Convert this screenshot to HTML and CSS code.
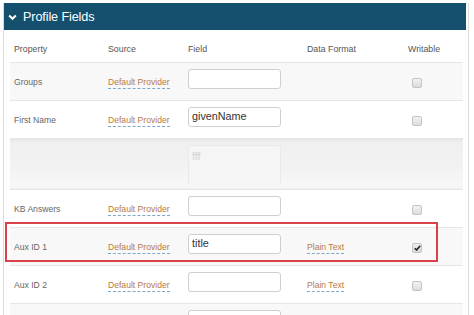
FILE: index.html
```html
<!DOCTYPE html>
<html>
<head>
<meta charset="utf-8">
<link rel="stylesheet" href="styles.css">
</head>
<body>
<div class="panel">
  <div class="panel-header">
    <svg class="chev" width="9" height="7" viewBox="0 0 9 7"><path d="M1.2 1.5 L4.5 4.8 L7.8 1.5" fill="none" stroke="#fff" stroke-width="2"/></svg>
    <span class="title">Profile Fields</span>
  </div>
  <div class="panel-body">
    <div class="grid head">
      <div class="c-prop">Property</div>
      <div class="c-src">Source</div>
      <div class="c-field">Field</div>
      <div class="c-fmt">Data Format</div>
      <div class="c-wr">Writable</div>
    </div>
    <div class="grid row odd">
      <div class="c-prop">Groups</div>
      <div class="c-src"><span class="link">Default Provider</span></div>
      <div class="c-field"><div class="input"></div></div>
      <div class="c-fmt"></div>
      <div class="c-wr"><span class="cb"></span></div>
    </div>
    <div class="grid row">
      <div class="c-prop">First Name</div>
      <div class="c-src"><span class="link">Default Provider</span></div>
      <div class="c-field"><div class="input">givenName</div></div>
      <div class="c-fmt"></div>
      <div class="c-wr"><span class="cb"></span></div>
    </div>
    <div class="grid row torn">
      <div class="c-prop"></div>
      <div class="c-src"></div>
      <div class="c-field"><div class="input faint">fff</div></div>
      <div class="c-fmt"></div>
      <div class="c-wr"></div>
    </div>
    <div class="grid row">
      <div class="c-prop">KB Answers</div>
      <div class="c-src"><span class="link">Default Provider</span></div>
      <div class="c-field"><div class="input"></div></div>
      <div class="c-fmt"></div>
      <div class="c-wr"><span class="cb"></span></div>
    </div>
    <div class="grid row odd">
      <div class="c-prop">Aux ID 1</div>
      <div class="c-src"><span class="link">Default Provider</span></div>
      <div class="c-field"><div class="input">title</div></div>
      <div class="c-fmt"><span class="link">Plain Text</span></div>
      <div class="c-wr"><span class="cb checked"><svg width="7" height="6" viewBox="0 0 7 6"><path d="M0.8 3.2 L2.6 5 L6.2 0.8" fill="none" stroke="#222" stroke-width="1.6"/></svg></span></div>
    </div>
    <div class="grid row">
      <div class="c-prop">Aux ID 2</div>
      <div class="c-src"><span class="link">Default Provider</span></div>
      <div class="c-field"><div class="input"></div></div>
      <div class="c-fmt"><span class="link">Plain Text</span></div>
      <div class="c-wr"><span class="cb"></span></div>
    </div>
    <div class="grid row odd">
      <div class="c-prop"></div>
      <div class="c-src"></div>
      <div class="c-field"><div class="input"></div></div>
      <div class="c-fmt"></div>
      <div class="c-wr"></div>
    </div>
  </div>
  <div class="highlight"></div>
</div>
</body>
</html>
```

FILE: styles.css
```css
html, body {
  margin: 0;
  padding: 0;
  background: #fff;
  overflow: hidden;
}
body {
  font-family: "Liberation Sans", Arial, sans-serif;
  color: #666;
}
.panel {
  position: relative;
  margin: 3px 3px 0 3px;
  width: 466px;
  height: 312px;
  overflow: hidden;
  border-left: 1px solid #dcdcdc;
  border-right: 1px solid #dcdcdc;
  box-sizing: border-box;
}
.panel-header {
  height: 27px;
  background: #14506e;
  display: flex;
  align-items: center;
  padding-left: 5px;
  margin-left: -1px;
  margin-right: 2px;
  color: #fff;
}
.chev {
  display: block;
  margin-right: 6px;
  margin-top: 1px;
}
.title {
  font-size: 12.6px;
  letter-spacing: -0.1px;
}
.panel-body {
  padding: 0 5px 0 6px;
}
.grid {
  display: grid;
  grid-template-columns: 98px 80px 119px 97px 60px;
  align-items: center;
  font-size: 8.6px;
}
.head {
  height: 32px;
  color: #555;
  font-size: 8.8px;
  padding-top: 5px;
  box-sizing: border-box;
}
.c-prop {
  padding-left: 4px;
}
.c-wr {
  padding-left: 4px;
}
.row {
  height: 38px;
  border-top: 1px solid #e6e6e6;
  box-sizing: border-box;
}
.row.odd {
  background: #f8f8f8;
}
.link {
  color: #b87a45;
  border-bottom: 1px dashed #7fa8c8;
  padding-bottom: 1px;
}
.input {
  width: 93px;
  height: 20px;
  box-sizing: border-box;
  border: 1px solid #cfcfcf;
  border-radius: 3px;
  background: #fff;
  font-size: 10.8px;
  color: #333;
  padding: 2px 0 0 3px;
  margin-top: -6px;
}
.cb {
  display: flex;
  align-items: center;
  justify-content: center;
  width: 8px;
  height: 8px;
  margin-left: 4px;
  margin-top: 3px;
  border: 1px solid #c4c4c4;
  border-radius: 2px;
  background: linear-gradient(#f2f2f2, #dcdcdc);
}
.cb.checked {
  background: linear-gradient(#f0f0f0, #d8d8d8);
}
.torn {
  height: 51px;
  background: linear-gradient(#efefef 0%, #f2f2f2 55%, #f8f8f8 100%);
  box-shadow: inset 0 3px 3px -2px rgba(0,0,0,0.06), inset 0 -2px 2px -1px rgba(0,0,0,0.04);
  align-items: start;
}
.torn .input {
  margin-top: 6px;
  height: 40px;
  border-color: #e9e9e9;
  border-bottom-color: transparent;
  background: #f5f5f5;
  color: #d2d2d2;
  padding-top: 4px;
}
.highlight {
  position: absolute;
  left: 1px;
  top: 219px;
  width: 433px;
  height: 40px;
  border: 2px solid #d9424a;
  box-sizing: border-box;
}
```
